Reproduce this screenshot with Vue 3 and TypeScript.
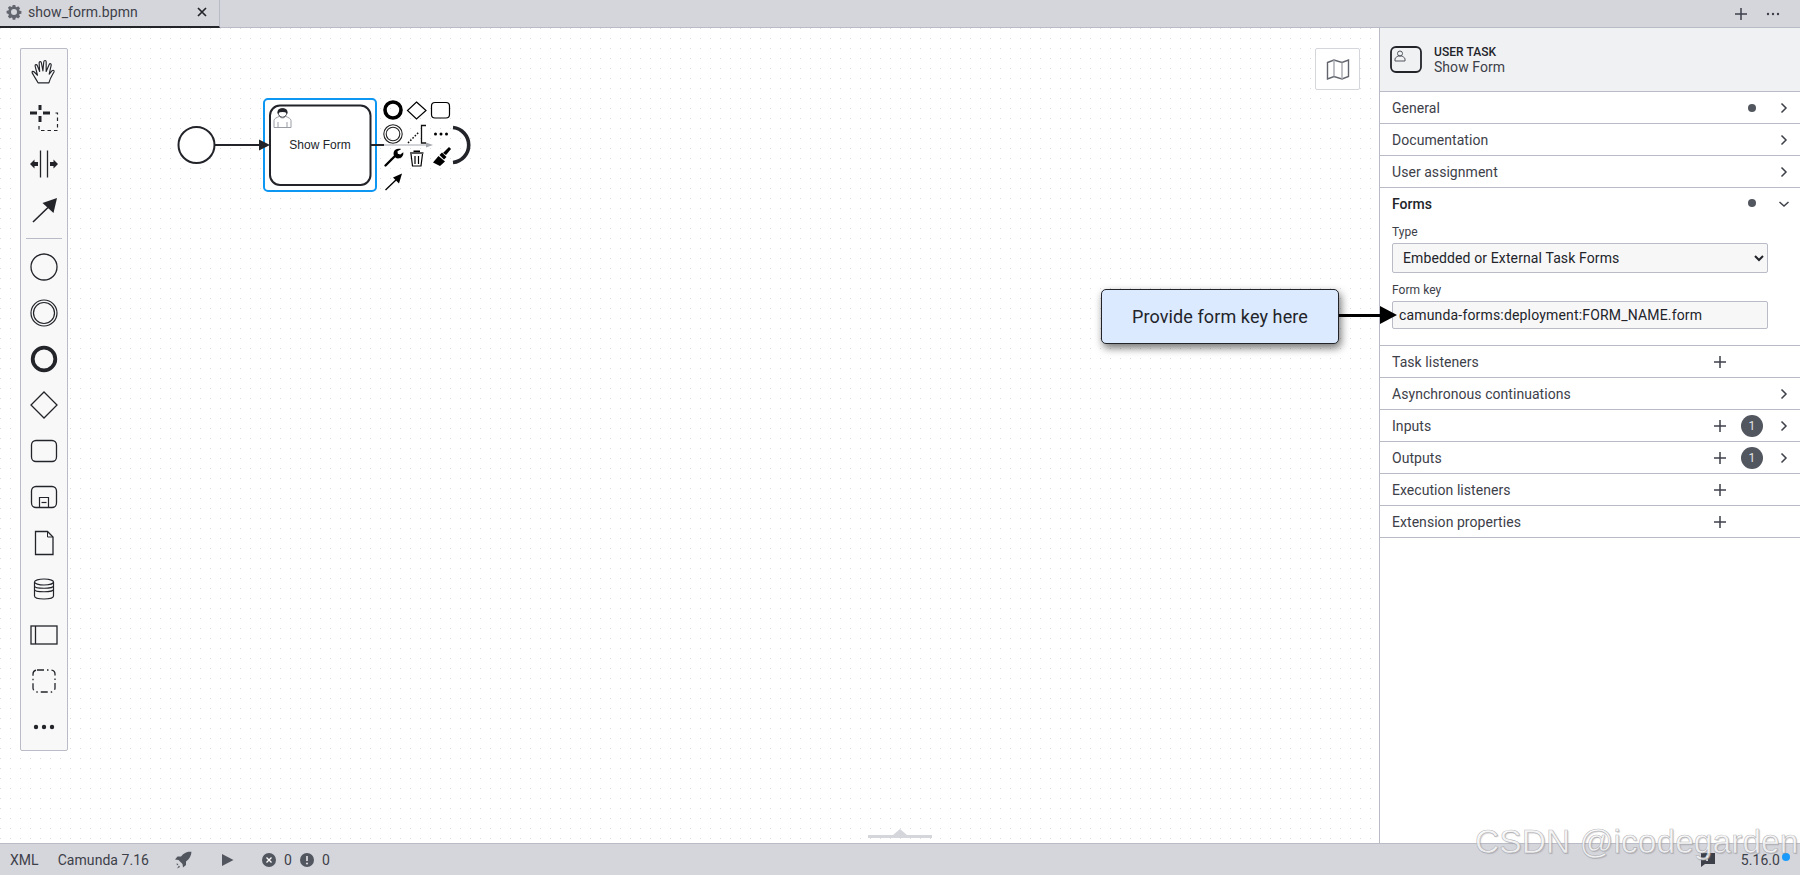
<script setup lang="ts">
interface Row {
  label: string
  dot?: boolean
  plus?: boolean
  badge?: number
  chevron?: 'right' | 'down'
}
const topRows: Row[] = [
  { label: 'General', dot: true, chevron: 'right' },
  { label: 'Documentation', chevron: 'right' },
  { label: 'User assignment', chevron: 'right' },
]
const bottomRows: Row[] = [
  { label: 'Task listeners', plus: true },
  { label: 'Asynchronous continuations', chevron: 'right' },
  { label: 'Inputs', plus: true, badge: 1, chevron: 'right' },
  { label: 'Outputs', plus: true, badge: 1, chevron: 'right' },
  { label: 'Execution listeners', plus: true },
  { label: 'Extension properties', plus: true },
]
</script>

<template>
  <div class="app">
    <header class="tabbar">
      <div class="tab">
        <svg class="gear" width="16" height="16" viewBox="0 0 16 16">
          <path fill="#62656e" fill-rule="evenodd" d="M6.7 1h2.6l.3 1.8 1.1.5 1.5-1 1.9 1.9-1 1.5.5 1.1 1.8.3v2.6l-1.8.3-.5 1.1 1 1.5-1.9 1.9-1.5-1-1.1.5-.3 1.8H6.7l-.3-1.8-1.1-.5-1.5 1-1.9-1.9 1-1.5-.5-1.1L.6 9.3V6.7l1.8-.3.5-1.1-1-1.5 1.9-1.9 1.5 1 1.1-.5zM8 5a3 3 0 1 0 0 6 3 3 0 0 0 0-6z" />
        </svg>
        <span class="tab-name">show_form.bpmn</span>
        <svg class="close" width="10" height="10" viewBox="0 0 10 10">
          <path d="M1 1l8 8M9 1l-8 8" stroke="#22242a" stroke-width="1.7" fill="none" />
        </svg>
      </div>
      <div class="tab-actions">
        <svg width="14" height="14" viewBox="0 0 14 14">
          <path d="M7 1v12M1 7h12" stroke="#3d4049" stroke-width="1.5" />
        </svg>
        <svg width="14" height="4" viewBox="0 0 14 4">
          <circle cx="2" cy="2" r="1.2" fill="#3d4049" />
          <circle cx="7" cy="2" r="1.2" fill="#3d4049" />
          <circle cx="12" cy="2" r="1.2" fill="#3d4049" />
        </svg>
      </div>
    </header>

    <main class="workspace">
      <section class="canvas">
        <svg class="diagram" width="1379" height="816" viewBox="0 28 1379 816">
          <defs>
            <pattern id="grid" x="0" y="28" width="10" height="10" patternUnits="userSpaceOnUse">
              <rect x="0" y="0" width="1" height="1" fill="#dcdde1" />
            </pattern>
          </defs>
          <rect x="0" y="28" width="1379" height="816" fill="url(#grid)" />

          <!-- start event -->
          <circle cx="196.5" cy="145" r="18" fill="#fff" stroke="#22242a" stroke-width="2" />
          <path d="M215 145H260" stroke="#22242a" stroke-width="2" />

          <!-- task -->
          <rect x="264" y="99" width="112" height="92" rx="4" fill="#fff" stroke="#0d96f2" stroke-width="2" />
          <path d="M259 139.5L270 145L259 150.5Z" fill="#22242a" />
          <rect x="270" y="105.5" width="100.5" height="79.5" rx="10" fill="#fff" stroke="#22242a" stroke-width="2" />
          <text x="320" y="149" text-anchor="middle" class="task-label">Show Form</text>
          <path d="M274 127.5v-7c0-2 3-3 5-4h7c2 1 5 2 5 4v7z" fill="#fff" stroke="#9a9ca3" stroke-width="1" />
          <path d="M278 122v5M287 122v5M279.5 116.5c1 2 5 2 6 0" fill="none" stroke="#9a9ca3" stroke-width="1" />
          <circle cx="282.5" cy="113" r="4.2" fill="#fff" stroke="#3d4049" stroke-width="1" />
          <path d="M278 112.5c0-5 9-5 9 0c-2-1.5-7-1.5-9 0z" fill="#22242a" stroke="#22242a" stroke-width="1.2" />

          <!-- outgoing preview -->
          <path d="M371 145H384" stroke="#22242a" stroke-width="2" />
          <path d="M384 145H430" stroke="#a5a7ae" stroke-width="1" />
          <path d="M426 142.5L433 145L426 147.5Z" fill="#a5a7ae" />

          <!-- context pad -->
          <circle cx="393" cy="110" r="8" fill="none" stroke="#000" stroke-width="3.6" />
          <path d="M416.5 102L426 110.5L416.5 119L407.5 110.5Z" fill="#fff" stroke="#000" stroke-width="1.2" />
          <rect x="431.5" y="102.5" width="18" height="15.5" rx="3.5" fill="#fff" stroke="#000" stroke-width="1.2" />
          <circle cx="393" cy="134" r="9.2" fill="none" stroke="#222" stroke-width="1.1" />
          <circle cx="393" cy="134" r="6.8" fill="none" stroke="#222" stroke-width="1.1" />
          <path d="M408 143L419 132" stroke="#111" stroke-width="1.5" stroke-dasharray="1.6 1.6" />
          <path d="M426 125.5H421.5V143H426" fill="none" stroke="#111" stroke-width="1.3" />
          <circle cx="435.5" cy="134" r="1.5" fill="#000" />
          <circle cx="441" cy="134" r="1.5" fill="#000" />
          <circle cx="446.5" cy="134" r="1.5" fill="#000" />
          <path d="M453 127.5A17.6 17.6 0 0 1 453 162.5" fill="none" stroke="#22242a" stroke-width="3.6" />
          <!-- wrench -->
          <path d="M385.5 165.5L395 156" stroke="#000" stroke-width="2.4" stroke-linecap="round" />
          <path d="M395.5 157.5c-2.500-2-2.500-5.500-.5-7.500c1.800-1.300 4-1.700 6-.8l-3.500 2l.3 2.500l2.500.8l3-2.200c.5 2.700-1 5-3 5.700c-1.800.6-3.700.6-4.800-.5z" fill="#000" />
          <!-- trash -->
          <path d="M410 153H423.5" stroke="#000" stroke-width="1.3" />
          <path d="M411 154l1.500 12h8.500l1.500-12" fill="#fff" stroke="#000" stroke-width="1.2" />
          <path d="M415 156v8M418.5 156v8" stroke="#000" stroke-width="1.2" />
          <path d="M413.5 150.5h6.5v1.500h-6.500z" fill="#000" />
          <!-- brush -->
          <path d="M433 162.5l5.500-6.500l6.500 5.500l-5 4.500z" fill="#000" />
          <path d="M439.5 155l2.500-2.500l4.500 4.500l-2.500 2.500z" fill="#000" />
          <path d="M443 153l6-6l2 2l-5 6z" fill="#000" />
          <!-- connect -->
          <path d="M385.5 190L398 178" stroke="#000" stroke-width="1.3" />
          <path d="M402 173.5L399 183.5L393 177.5Z" fill="#000" />
        </svg>

        <aside class="palette">
          <button class="tool">
            <svg width="26" height="26" viewBox="0 0 24 24">
              <path d="M6.5 22C5 19 1.5 14 1 12.5C.8 11.3 2 11 3 12L6 15L3.8 6.5C3.5 5 5.2 4.6 5.8 6L8 11.5L7.5 3.5C7.5 2 9.4 2 9.6 3.5L11 11L11.8 2.5C12 1 14 1 14 2.5L14 11.5L16.8 5C17.4 3.7 19 4.3 18.6 5.8L16.8 14L19.5 10.8C20.5 9.9 21.8 10.7 21.2 12C19.5 15 17.5 18 16.5 22Z" fill="none" stroke="#22242a" stroke-width="1.05" stroke-linejoin="round" />
            </svg>
          </button>
          <button class="tool">
            <svg width="30" height="30" viewBox="0 0 30 30">
              <path d="M1 10H8M14 10H21M11 2V7M11 13V19" stroke="#22242a" stroke-width="3" />
              <path d="M10 23V27.5H28.5V10H24" fill="none" stroke="#22242a" stroke-width="1.2" stroke-dasharray="3.5 3" />
            </svg>
          </button>
          <button class="tool">
            <svg width="30" height="30" viewBox="0 0 30 30">
              <path d="M11.5 1.5V28.5M18.5 1.5V28.5" stroke="#22242a" stroke-width="1.3" />
              <path d="M1 15L5.5 10.5V13H9V17H5.5V19.5Z M29 15L24.5 10.5V13H21V17H24.5V19.5Z" fill="#22242a" />
            </svg>
          </button>
          <button class="tool">
            <svg width="30" height="30" viewBox="0 0 30 30">
              <path d="M4 27L19 12.5" stroke="#22242a" stroke-width="1.6" />
              <path d="M28 3L24.5 18L13.5 8Z" fill="#22242a" />
            </svg>
          </button>
          <hr class="sep" />
          <button class="tool">
            <svg width="30" height="30" viewBox="0 0 30 30"><circle cx="15" cy="15" r="13" fill="none" stroke="#22242a" stroke-width="1.3" /></svg>
          </button>
          <button class="tool">
            <svg width="30" height="30" viewBox="0 0 30 30"><circle cx="15" cy="15" r="13" fill="none" stroke="#22242a" stroke-width="1.2" /><circle cx="15" cy="15" r="10.5" fill="none" stroke="#22242a" stroke-width="1.2" /></svg>
          </button>
          <button class="tool">
            <svg width="30" height="30" viewBox="0 0 30 30"><circle cx="15" cy="15" r="11.3" fill="none" stroke="#22242a" stroke-width="3.8" /></svg>
          </button>
          <button class="tool">
            <svg width="30" height="30" viewBox="0 0 30 30"><path d="M15 2L28 15L15 28L2 15Z" fill="none" stroke="#22242a" stroke-width="1.3" /></svg>
          </button>
          <button class="tool">
            <svg width="30" height="30" viewBox="0 0 30 30"><rect x="2.5" y="4.5" width="25" height="21" rx="4.5" fill="none" stroke="#22242a" stroke-width="1.3" /></svg>
          </button>
          <button class="tool">
            <svg width="30" height="30" viewBox="0 0 30 30"><rect x="2.5" y="4.5" width="25" height="21" rx="4.5" fill="none" stroke="#22242a" stroke-width="1.3" /><path d="M10.5 25V15.5H19.5V25" fill="none" stroke="#22242a" stroke-width="1.2" /><path d="M12.5 20.5H17.5" stroke="#22242a" stroke-width="1.2" /></svg>
          </button>
          <button class="tool">
            <svg width="30" height="30" viewBox="0 0 30 30"><path d="M6.5 3.5H18.5L24 9V26.5H6.5Z" fill="none" stroke="#22242a" stroke-width="1.3" /><path d="M18.5 3.5V9H24Z" fill="none" stroke="#22242a" stroke-width="1" /></svg>
          </button>
          <button class="tool">
            <svg width="30" height="30" viewBox="0 0 30 30"><path d="M5.5 8V22C5.5 26 24.5 26 24.5 22V8" fill="none" stroke="#22242a" stroke-width="1.2" /><ellipse cx="15" cy="8" rx="9.5" ry="3" fill="none" stroke="#22242a" stroke-width="1.2" /><path d="M5.5 12C5.5 15 24.5 15 24.5 12M5.5 15.5C5.5 18.5 24.5 18.5 24.5 15.5" fill="none" stroke="#22242a" stroke-width="1.2" /></svg>
          </button>
          <button class="tool">
            <svg width="30" height="30" viewBox="0 0 30 30"><rect x="2" y="6" width="26" height="18" fill="none" stroke="#22242a" stroke-width="1.3" /><path d="M6.5 6V24" stroke="#22242a" stroke-width="1.3" /></svg>
          </button>
          <button class="tool">
            <svg width="30" height="30" viewBox="0 0 30 30"><rect x="4" y="4" width="22" height="22" rx="4" fill="none" stroke="#22242a" stroke-width="1.3" stroke-dasharray="7 3 1.5 3" /></svg>
          </button>
          <button class="tool">
            <svg width="30" height="30" viewBox="0 0 30 30"><circle cx="7" cy="15" r="2.2" fill="#22242a" /><circle cx="15" cy="15" r="2.2" fill="#22242a" /><circle cx="23" cy="15" r="2.2" fill="#22242a" /></svg>
          </button>
        </aside>

        <button class="map-btn">
          <svg width="24" height="21" viewBox="0 0 24 21">
            <path d="M1.5 3.5L8 1L16 3.5L22.5 1V17.5L16 20L8 17.5L1.5 20Z" fill="none" stroke="#62656e" stroke-width="1.4" />
            <path d="M8 1V17.5M16 3.5V20" stroke="#a6a8b0" stroke-width="1.4" />
          </svg>
        </button>

        <div class="callout">Provide form key here</div>
        <div class="callout-arrow">
          <span class="arrow-line"></span>
          <span class="arrow-head"></span>
        </div>

        <div class="dock-handle"></div>
      </section>

      <aside class="panel">
        <div class="panel-head">
          <svg width="32" height="27" viewBox="0 0 32 27">
            <rect x="1" y="1" width="30" height="25" rx="5" fill="none" stroke="#22242a" stroke-width="1.8" />
            <circle cx="10" cy="7.5" r="2.5" fill="none" stroke="#52565f" />
            <path d="M5 15v-2c0-1.5 2-2 3-3h4c1 1 3 1.5 3 3v2z" fill="none" stroke="#52565f" />
          </svg>
          <div class="head-text">
            <div class="head-type">USER TASK</div>
            <div class="head-name">Show Form</div>
          </div>
        </div>

        <div v-for="row in topRows" :key="row.label" class="row">
          <span class="row-label">{{ row.label }}</span>
          <span v-if="row.dot" class="dot"></span>
          <svg class="chev" width="12" height="12" viewBox="0 0 12 12">
            <path d="M3.5 1.5L8 6L3.5 10.5" fill="none" stroke="#3d4049" stroke-width="1.5" />
          </svg>
        </div>

        <div class="group">
          <div class="row open">
            <span class="row-label strong">Forms</span>
            <span class="dot"></span>
            <svg class="chev" width="12" height="12" viewBox="0 0 12 12">
              <path d="M1.5 4L6 8L10.5 4" fill="none" stroke="#3d4049" stroke-width="1.5" />
            </svg>
          </div>
          <div class="fields">
            <label class="field-label">Type</label>
            <select class="select">
              <option>Embedded or External Task Forms</option>
            </select>
            <label class="field-label second">Form key</label>
            <input class="input" value="camunda-forms:deployment:FORM_NAME.form" />
          </div>
        </div>

        <div v-for="row in bottomRows" :key="row.label" class="row">
          <span class="row-label">{{ row.label }}</span>
          <svg v-if="row.plus" class="plus" width="14" height="14" viewBox="0 0 14 14">
            <path d="M7 1v12M1 7h12" stroke="#3d4049" stroke-width="1.5" />
          </svg>
          <span v-if="row.badge" class="badge">{{ row.badge }}</span>
          <svg v-if="row.chevron" class="chev" width="12" height="12" viewBox="0 0 12 12">
            <path d="M3.5 1.5L8 6L3.5 10.5" fill="none" stroke="#3d4049" stroke-width="1.5" />
          </svg>
        </div>
      </aside>
    </main>

    <footer class="statusbar">
      <span class="st-xml">XML</span>
      <span class="st-engine">Camunda 7.16</span>
      <svg class="st-rocket" width="18" height="18" viewBox="0 0 18 18">
        <path fill="#52565f" d="M17.5.5c-4.5 0-8 1.500-10.500 5H3.500L1 8.500l3.500.5L8.500 13l.5 3.500 3-2.500v-3.500c3.500-2.500 5.500-6 5.500-10.500zM2.500 12.500l2 .5-1.500 1.500zM5 14.500l1 1.500-3 1.500z" />
      </svg>
      <svg class="st-play" width="12" height="14" viewBox="0 0 12 14">
        <path fill="#52565f" d="M0 1V13L11.5 7Z" />
      </svg>
      <svg class="st-icon" width="14" height="14" viewBox="0 0 14 14">
        <circle cx="7" cy="7" r="7" fill="#52565f" />
        <path d="M4.5 4.5l5 5M9.5 4.5l-5 5" stroke="#fff" stroke-width="1.3" />
      </svg>
      <span class="st-count">0</span>
      <svg class="st-icon second" width="14" height="14" viewBox="0 0 14 14">
        <circle cx="7" cy="7" r="7" fill="#52565f" />
        <path d="M7 3v5" stroke="#d5d6dc" stroke-width="1.8" />
        <circle cx="7" cy="10.5" r="1.1" fill="#d5d6dc" />
      </svg>
      <span class="st-count">0</span>
      <span class="spacer"></span>
      <svg class="st-feedback" width="14" height="15" viewBox="0 0 14 15">
        <path fill="#3d4049" d="M0 1h14v11H4l-4 3z" />
        <path fill="#d5d6dc" d="M5 3.5h2v2H5zM5 7h2v2H5z" />
      </svg>
      <span class="st-version">5.16.0<i class="version-dot"></i></span>
    </footer>

    <div class="watermark">CSDN @icodegarden</div>
  </div>
</template>

<style scoped>
.app {
  position: relative;
  display: flex;
  flex-direction: column;
  width: 1800px;
  height: 875px;
  overflow: hidden;
  background: #fff;
  color: #22242a;
  font-family: Roboto, "Noto Sans", sans-serif;
  font-size: 14px;
  letter-spacing: 0.05px;
}
.tabbar {
  display: flex;
  align-items: stretch;
  justify-content: space-between;
  flex: none;
  height: 28px;
  background: #d5d6dc;
  border-bottom: 1px solid #b9bcc6;
  box-sizing: border-box;
}
.tab {
  display: flex;
  align-items: center;
  width: 220px;
  height: 28px;
  box-sizing: border-box;
  padding: 0 11px 2px 6px;
  border-right: 1px solid #b9bcc6;
  border-bottom: 2px solid #22242a;
}
.tab-name {
  margin-left: 6px;
  flex: 1;
  color: #3d4049;
}
.close {
  margin-right: 1px;
}
.tab-actions {
  display: flex;
  align-items: center;
  gap: 18px;
  padding-right: 20px;
}
.workspace {
  display: flex;
  flex: 1;
  min-height: 0;
}
.canvas {
  position: relative;
  z-index: 1;
  flex: none;
  width: 1379px;
}
.diagram {
  position: absolute;
  inset: 0;
  display: block;
}
.task-label {
  font-family: "Liberation Sans", Arial, sans-serif;
  font-size: 12px;
  letter-spacing: 0;
  fill: #22242a;
}
.palette {
  position: absolute;
  left: 20px;
  top: 20px;
  width: 48px;
  height: 703px;
  box-sizing: border-box;
  padding: 0;
  display: flex;
  flex-direction: column;
  align-items: center;
  background: #f8f8f8;
  border: 1px solid #b9bcc6;
  border-radius: 2px;
}
.tool {
  flex: none;
  width: 46px;
  height: 46px;
  padding: 0;
  display: flex;
  align-items: center;
  justify-content: center;
  border: 0;
  background: none;
}
.sep {
  flex: none;
  width: 36px;
  margin: 5px 0;
  height: 1px;
  box-sizing: border-box;
  border: 0;
  background: #b9bcc6;
}
.map-btn {
  position: absolute;
  left: 1315px;
  top: 20px;
  width: 45px;
  height: 42px;
  padding: 0;
  box-sizing: border-box;
  display: flex;
  align-items: center;
  justify-content: center;
  background: #fff;
  border: 1px solid #d5d6dc;
  border-radius: 2px;
}
.callout {
  position: absolute;
  left: 1101px;
  top: 261px;
  width: 238px;
  height: 55px;
  box-sizing: border-box;
  display: flex;
  align-items: center;
  justify-content: center;
  background: #dbeafe;
  border: 1px solid #22242a;
  border-radius: 5px;
  box-shadow: 2px 4px 8px rgba(0, 0, 0, 0.55);
  font-family: Roboto, sans-serif;
  font-size: 18px;
  letter-spacing: 0.1px;
  color: #22242a;
}
.callout-arrow {
  position: absolute;
  left: 1339px;
  top: 278px;
  display: flex;
  align-items: center;
  width: 58px;
  height: 18px;
}
.arrow-line {
  flex: none;
  width: 41px;
  height: 3px;
  background: #000;
}
.arrow-head {
  flex: none;
  width: 0;
  height: 0;
  border-left: 17px solid #000;
  border-top: 9px solid transparent;
  border-bottom: 9px solid transparent;
}
.dock-handle {
  position: absolute;
  left: 868px;
  bottom: 5px;
  width: 64px;
  height: 3px;
  background: #d5d6dc;
}
.dock-handle::before {
  content: "";
  position: absolute;
  left: 25px;
  top: -6px;
  border-left: 7px solid transparent;
  border-right: 7px solid transparent;
  border-bottom: 6px solid #d5d6dc;
}
.panel {
  flex: 1;
  min-width: 0;
  border-left: 1px solid #b9bcc6;
  background: #fff;
}
.panel-head {
  display: flex;
  align-items: center;
  gap: 12px;
  height: 64px;
  box-sizing: border-box;
  padding: 0 0 0 10px;
  background: #f0f1f3;
  border-bottom: 1px solid #b9bcc6;
}
.head-text {
  line-height: 15px;
}
.head-type {
  font-size: 12px;
  font-weight: 500;
}
.head-name {
  font-size: 14px;
  color: #3d4049;
}
.row {
  position: relative;
  display: flex;
  align-items: center;
  height: 32px;
  box-sizing: border-box;
  padding-left: 12px;
  border-bottom: 1px solid #b9bcc6;
  background: #fff;
}
.row.open {
  border-bottom: 0;
  height: 31px;
}
.row-label {
  flex: 1;
  color: #3d4049;
}
.row-label.strong {
  font-weight: 500;
  color: #22242a;
}
.dot {
  position: absolute;
  left: 368px;
  top: 12px;
  width: 8px;
  height: 8px;
  border-radius: 50%;
  background: #52565f;
}
.open .dot {
  top: 11px;
}
.plus {
  position: absolute;
  left: 333px;
  top: 9px;
}
.badge {
  position: absolute;
  left: 361px;
  top: 5px;
  width: 22px;
  height: 22px;
  display: flex;
  align-items: center;
  justify-content: center;
  border-radius: 50%;
  background: #52565f;
  color: #e3e4e8;
  font-size: 12px;
}
.chev {
  position: absolute;
  left: 398px;
  top: 10px;
}
.group {
  height: 158px;
  box-sizing: border-box;
  border-bottom: 1px solid #b9bcc6;
}
.fields {
  display: flex;
  flex-direction: column;
  align-items: flex-start;
  padding: 0 32px 0 12px;
}
.field-label {
  font-size: 12px;
  line-height: 16px;
  color: #3d4049;
  margin-top: 5px;
  margin-bottom: 3px;
}
.field-label.second {
  margin-top: 9px;
  margin-bottom: 3px;
}
.select {
  width: 376px;
  height: 30px;
  padding: 0 6px;
  box-sizing: border-box;
  background: #f7f7f8;
  border: 1px solid #b9bcc6;
  border-radius: 2px;
  color: #22242a;
  font: inherit;
  font-size: 14px;
  letter-spacing: 0.12px;
}
.input {
  width: 376px;
  height: 28px;
  box-sizing: border-box;
  padding: 0 6px;
  background: #f7f7f8;
  border: 1px solid #b9bcc6;
  border-radius: 2px;
  color: #22242a;
  font: inherit;
  font-size: 14px;
  letter-spacing: 0.17px;
  outline: none;
}
.statusbar {
  display: flex;
  align-items: center;
  flex: none;
  height: 32px;
  box-sizing: border-box;
  padding: 0 0 0 10px;
  background: #d5d6dc;
  border-top: 1px solid #b9bcc6;
  color: #3d4049;
}
.st-engine {
  margin-left: 19px;
}
.st-rocket {
  margin-left: 25px;
}
.st-play {
  margin-left: 30px;
}
.st-icon {
  margin-left: 28px;
}
.st-icon.second {
  margin-left: 8px;
}
.st-count {
  margin-left: 8px;
}
.spacer {
  flex: 1;
}
.st-feedback {
  margin-right: 26px;
}
.st-version {
  position: relative;
  margin-right: 20px;
}
.version-dot {
  position: absolute;
  right: -10px;
  top: 1px;
  width: 8px;
  height: 8px;
  border-radius: 50%;
  background: #1a9bfc;
}
.watermark {
  position: absolute;
  z-index: 2;
  left: 1475px;
  top: 822px;
  font-family: "Liberation Sans", Arial, sans-serif;
  font-size: 33.5px;
  line-height: 40px;
  white-space: nowrap;
  color: rgba(255, 255, 255, 0.75);
  -webkit-text-stroke: 0.6px rgba(150, 150, 155, 0.7);
  text-shadow: 1px 1px 1px rgba(120, 120, 125, 0.35);
  pointer-events: none;
}
</style>

<style>
html,
body {
  margin: 0;
  overflow: hidden;
}
</style>
